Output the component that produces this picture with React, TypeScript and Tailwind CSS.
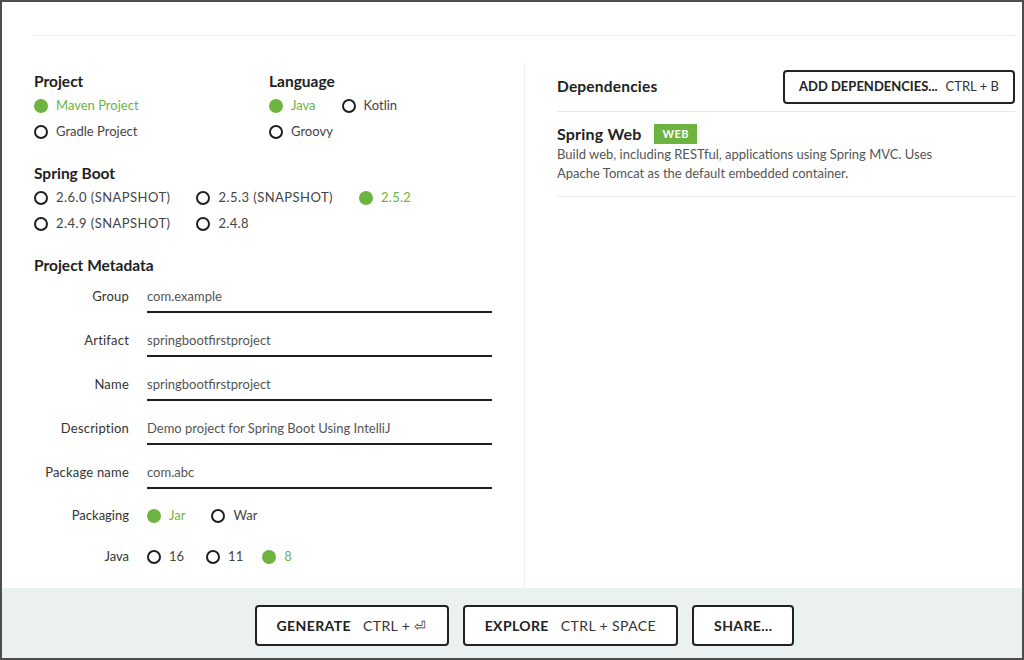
import React from "react"

function Radio({ label, checked, className = "", textClass = "" }: { label: string; checked?: boolean; className?: string; textClass?: string }) {
  return (
    <label className={`flex items-center gap-2 ${className}`}>
      {checked ? (
        <span className="w-[14px] h-[14px] rounded-full bg-[#6db33f] shrink-0" />
      ) : (
        <span className="w-[14px] h-[14px] rounded-full border-2 border-[#1f1f1f] shrink-0" />
      )}
      <span className={`${checked ? "text-[#6db33f]" : "text-[#444]"} ${textClass}`}>{label}</span>
    </label>
  )
}

function Heading({ children }: { children: React.ReactNode }) {
  return <div className="h-5 leading-5 text-[15.5px] font-bold text-[#222]">{children}</div>
}

function Field({ label, value }: { label: string; value: string }) {
  return (
    <div className="flex items-start">
      <div className="w-[95px] pt-[5px] leading-5 text-right text-[#333] tracking-[0.2px]">{label}</div>
      <div className="ml-[18px] w-[345px] h-[32px] pt-[5px] leading-5 border-b-2 border-[#1f1f1f] text-[#555]">
        {value}
      </div>
    </div>
  )
}

function OptionRow({ label, children, className = "" }: { label: string; children: React.ReactNode; className?: string }) {
  return (
    <div className={`flex items-center h-5 ${className}`}>
      <div className="w-[95px] text-right text-[#333]">{label}</div>
      <div className="ml-[18px] flex items-center">{children}</div>
    </div>
  )
}

function KeyButton({ title, shortcut }: { title: string; shortcut?: string }) {
  return (
    <button className="h-[41px] px-[20px] border-2 border-[#222] rounded-[4px] bg-white flex items-center text-[14px] text-[#222]">
      <span className="font-bold tracking-[0.4px]">{title}</span>
      {shortcut && <span className="ml-[12px] text-[#333] tracking-[0.4px]">{shortcut}</span>}
    </button>
  )
}

export default function App() {
  return (
    <div className="w-[1024px] h-[660px] border-2 border-[#4d4d4d] bg-white flex flex-col text-[13px] font-['Lato','Liberation_Sans',sans-serif] text-[#333]">
      <div className="mt-[33px] ml-[32px] mr-[7px] border-t border-[#eeeeee]" />

      <div className="mt-[27px] ml-[32px] mr-[7px] flex flex-1">
        {/* Left column */}
        <div className="w-[491px] border-r border-[#eeeeee] pt-[8px]">
          <div className="grid grid-cols-[235px_1fr]">
            <div>
              <Heading>Project</Heading>
              <div className="mt-[2px]">
                <div className="h-[26px] flex items-center">
                  <Radio label="Maven Project" checked />
                </div>
                <div className="h-[26px] flex items-center">
                  <Radio label="Gradle Project" />
                </div>
              </div>
            </div>
            <div>
              <Heading>Language</Heading>
              <div className="mt-[2px]">
                <div className="h-[26px] flex items-center">
                  <Radio label="Java" checked className="mr-[26px]" />
                  <Radio label="Kotlin" />
                </div>
                <div className="h-[26px] flex items-center">
                  <Radio label="Groovy" />
                </div>
              </div>
            </div>
          </div>

          <div className="mt-[18px]">
            <Heading>Spring Boot</Heading>
            <div className="mt-[2px]">
              <div className="h-[26px] flex items-center">
                <Radio label="2.6.0 (SNAPSHOT)" className="mr-[26px]" textClass="tracking-[0.45px]" />
                <Radio label="2.5.3 (SNAPSHOT)" className="mr-[26px]" textClass="tracking-[0.45px]" />
                <Radio label="2.5.2" checked textClass="tracking-[0.3px]" />
              </div>
              <div className="h-[26px] flex items-center">
                <Radio label="2.4.9 (SNAPSHOT)" className="mr-[26px]" textClass="tracking-[0.45px]" />
                <Radio label="2.4.8" textClass="tracking-[0.3px]" />
              </div>
            </div>
          </div>

          <div className="mt-[18px]">
            <Heading>Project Metadata</Heading>
            <div className="mt-[6px] flex flex-col gap-[12px]">
              <Field label="Group" value="com.example" />
              <Field label="Artifact" value="springbootfirstproject" />
              <Field label="Name" value="springbootfirstproject" />
              <Field label="Description" value="Demo project for Spring Boot Using IntelliJ" />
              <Field label="Package name" value="com.abc" />
            </div>
            <OptionRow label="Packaging" className="mt-[17px]">
              <Radio label="Jar" checked className="mr-[26px]" />
              <Radio label="War" />
            </OptionRow>
            <OptionRow label="Java" className="mt-[21px]">
              <Radio label="16" className="mr-[22px]" />
              <Radio label="11" className="mr-[19px]" />
              <Radio label="8" checked />
            </OptionRow>
          </div>
        </div>

        {/* Right column */}
        <div className="flex-1 pl-[32px] pt-[7px]">
          <div className="pb-[7px] border-b border-[#e8e8e8]">
            <div className="h-[34px] flex items-center justify-between">
              <div className="text-[15.5px] font-bold text-[#222] tracking-[0.2px]">Dependencies</div>
              <button className="h-[34px] w-[232px] border-2 border-[#222] rounded-[4px] flex items-center justify-center text-[13px] text-[#222]">
                <span className="font-bold">ADD DEPENDENCIES...</span>
                <span className="ml-[8px] text-[#333]">CTRL + B</span>
              </button>
            </div>
          </div>
          <div className="pt-[11px] pb-[13px] border-b border-[#e8e8e8]">
            <div className="h-[22px] flex items-center">
              <span className="text-[16px] font-bold text-[#222] tracking-[0.2px]">Spring Web</span>
              <span className="ml-[13px] h-[20px] px-[8px] flex items-center bg-[#6db33f] text-white text-[11px] font-bold tracking-[0.4px]">
                WEB
              </span>
            </div>
            <div className="leading-[19px] text-[#555] w-[400px]">
              Build web, including RESTful, applications using Spring MVC. Uses Apache Tomcat as the default embedded container.
            </div>
          </div>
        </div>
      </div>

      {/* Footer */}
      <div className="h-[70px] bg-[#ebf0f0]">
        <div className="ml-[32px] mr-[7px] pt-[17px] flex justify-center gap-[14px]">
          <KeyButton title="GENERATE" shortcut="CTRL + ⏎" />
          <KeyButton title="EXPLORE" shortcut="CTRL + SPACE" />
          <KeyButton title="SHARE..." />
        </div>
      </div>
    </div>
  )
}
